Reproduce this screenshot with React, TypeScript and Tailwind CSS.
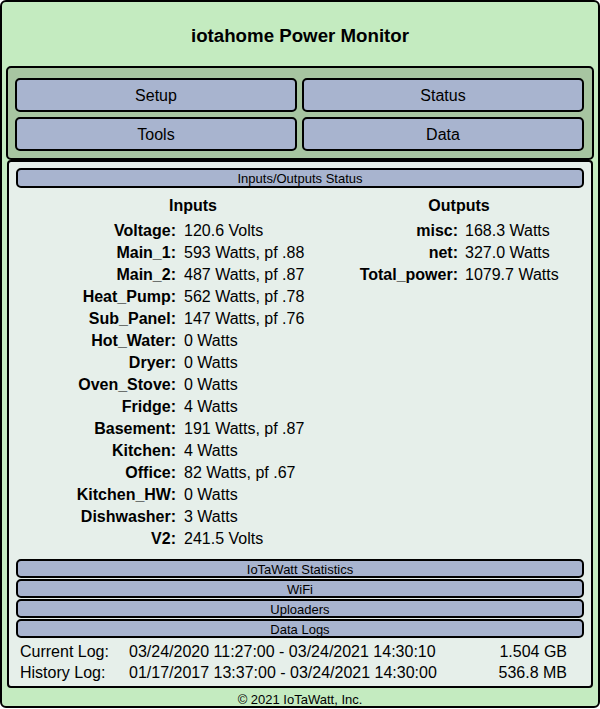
export default function App() {
  const inputs = [
    ["Voltage:", "120.6 Volts"],
    ["Main_1:", "593 Watts, pf .88"],
    ["Main_2:", "487 Watts, pf .87"],
    ["Heat_Pump:", "562 Watts, pf .78"],
    ["Sub_Panel:", "147 Watts, pf .76"],
    ["Hot_Water:", "0 Watts"],
    ["Dryer:", "0 Watts"],
    ["Oven_Stove:", "0 Watts"],
    ["Fridge:", "4 Watts"],
    ["Basement:", "191 Watts, pf .87"],
    ["Kitchen:", "4 Watts"],
    ["Office:", "82 Watts, pf .67"],
    ["Kitchen_HW:", "0 Watts"],
    ["Dishwasher:", "3 Watts"],
    ["V2:", "241.5 Volts"],
  ];

  const outputs = [
    ["misc:", "168.3 Watts"],
    ["net:", "327.0 Watts"],
    ["Total_power:", "1079.7 Watts"],
  ];

  const bars = ["IoTaWatt Statistics", "WiFi", "Uploaders", "Data Logs"];

  return (
    <div
      className="w-[600px] h-[709px] text-black"
      style={{ fontFamily: '"Liberation Sans", Arial, sans-serif' }}
    >
      <div className="h-[708px] border-2 border-black rounded-md bg-[#c4ebc0] flex flex-col">
        {/* title */}
        <div className="h-[64px] shrink-0 flex items-center justify-center text-[18.7px] font-bold pt-[4px]">
          iotahome Power Monitor
        </div>

        {/* nav */}
        <div className="mx-[4px] h-[94px] shrink-0 border-2 border-black rounded-[5px] bg-[#a7c5a1] pt-[10px] pl-[7px] pr-[8px] grid grid-cols-2 gap-[5px] content-start">
          {["Setup", "Status", "Tools", "Data"].map((label) => (
            <div
              key={label}
              className="h-[34px] border-2 border-black rounded-[5px] bg-[#a8b4cf] flex items-center justify-center text-[16px] pt-[2px]"
            >
              {label}
            </div>
          ))}
        </div>

        {/* content */}
        <div className="mx-[5px] h-[528px] shrink-0 border-2 border-black rounded-[4px] bg-[#e6efea] pt-[6px] px-[7px] flex flex-col">
          <div className="h-[20px] shrink-0 border-2 border-black rounded-[5px] bg-[#a8b4cf] flex items-center justify-center text-[13px] leading-none pt-[1px]">
            Inputs/Outputs Status
          </div>

          <div className="flex shrink-0 mt-[7px] h-[355px]">
            <div className="ml-[60px] w-[234px]">
              <div className="h-[22px] mb-[3px] flex items-center justify-center font-bold text-[16px]">
                Inputs
              </div>
              {inputs.map(([k, v]) => (
                <div key={k} className="h-[22px] flex items-center text-[16px]">
                  <div className="w-[100px] text-right font-bold">{k}</div>
                  <div className="ml-[8px] whitespace-nowrap">{v}</div>
                </div>
              ))}
            </div>
            <div className="ml-[48px] w-[202px]">
              <div className="h-[22px] mb-[3px] flex items-center justify-center font-bold text-[16px]">
                Outputs
              </div>
              {outputs.map(([k, v]) => (
                <div key={k} className="h-[22px] flex items-center text-[16px]">
                  <div className="w-[100px] text-right font-bold whitespace-nowrap">{k}</div>
                  <div className="ml-[7px] whitespace-nowrap">{v}</div>
                </div>
              ))}
            </div>
          </div>

          <div className="mt-[9px] shrink-0 flex flex-col">
            {bars.map((b) => (
              <div
                key={b}
                className="h-[19px] mb-[1px] border-2 border-black rounded-[5px] bg-[#a8b4cf] flex items-center justify-center text-[13px] leading-none pt-[1px]"
              >
                {b}
              </div>
            ))}
          </div>

          <div className="text-[16px] shrink-0 pl-[4px] pr-[17px] pt-[2px]">
            <div className="h-[21px] flex items-center">
              <div className="w-[109px]">Current Log:</div>
              <div className="flex-1">03/24/2020 11:27:00 - 03/24/2021 14:30:10</div>
              <div className="text-right">1.504 GB</div>
            </div>
            <div className="h-[21px] flex items-center">
              <div className="w-[109px]">History Log:</div>
              <div className="flex-1">01/17/2017 13:37:00 - 03/24/2021 14:30:00</div>
              <div className="text-right">536.8 MB</div>
            </div>
          </div>
        </div>

        {/* footer */}
        <div className="h-[18px] shrink-0 flex items-center justify-center text-[13px] leading-none pt-[5px]">
          © 2021 IoTaWatt, Inc.
        </div>
      </div>
    </div>
  );
}
